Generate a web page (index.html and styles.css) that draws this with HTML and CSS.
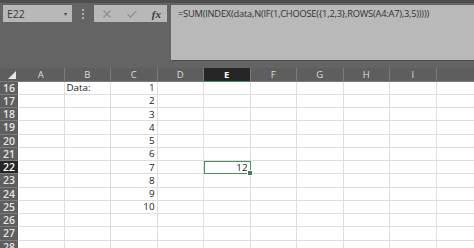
FILE: index.html
```html
<!DOCTYPE html>
<html>
<head>
<meta charset="utf-8">
<link rel="stylesheet" href="styles.css">
</head>
<body>
<div class="app">
  <div class="fbar">
    <div class="namebox"><span>E22</span><span class="caret">&#9662;</span></div>
    <div class="grip"><i></i><i></i><i></i></div>
    <div class="btns">
      <svg class="ico" width="10" height="10" viewBox="0 0 10 10"><path d="M1.5 1.5L8.5 8.5M8.5 1.5L1.5 8.5" stroke="#8c8c8c" stroke-width="1.1" fill="none"/></svg>
      <svg class="ico" width="12" height="10" viewBox="0 0 12 10"><path d="M1.5 5.2L4.5 8.2L10.5 1.8" stroke="#8c8c8c" stroke-width="1.2" fill="none"/></svg>
      <span class="fx">fx</span>
    </div>
    <div class="formula">=SUM(INDEX(data,N(IF(1,CHOOSE({1,2,3},ROWS(A4:A7),3,5)))))</div>
  </div>
  <div class="sheet">
    <div class="corner"><svg width="8" height="8" viewBox="0 0 8 8"><path d="M8 0L8 8L0 8Z" fill="#e6e6e6"/></svg></div>
    <div class="ch">A</div><div class="ch">B</div><div class="ch">C</div><div class="ch">D</div><div class="ch sel">E</div><div class="ch">F</div><div class="ch">G</div><div class="ch">H</div><div class="ch">I</div><div class="ch"></div>

    <div class="rh">16</div><div class="c"></div><div class="c">Data:</div><div class="c n">1</div><div class="c"></div><div class="c"></div><div class="c"></div><div class="c"></div><div class="c"></div><div class="c"></div><div class="c"></div>
    <div class="rh">17</div><div class="c"></div><div class="c"></div><div class="c n">2</div><div class="c"></div><div class="c"></div><div class="c"></div><div class="c"></div><div class="c"></div><div class="c"></div><div class="c"></div>
    <div class="rh">18</div><div class="c"></div><div class="c"></div><div class="c n">3</div><div class="c"></div><div class="c"></div><div class="c"></div><div class="c"></div><div class="c"></div><div class="c"></div><div class="c"></div>
    <div class="rh">19</div><div class="c"></div><div class="c"></div><div class="c n">4</div><div class="c"></div><div class="c"></div><div class="c"></div><div class="c"></div><div class="c"></div><div class="c"></div><div class="c"></div>
    <div class="rh">20</div><div class="c"></div><div class="c"></div><div class="c n">5</div><div class="c"></div><div class="c"></div><div class="c"></div><div class="c"></div><div class="c"></div><div class="c"></div><div class="c"></div>
    <div class="rh">21</div><div class="c"></div><div class="c"></div><div class="c n">6</div><div class="c"></div><div class="c"></div><div class="c"></div><div class="c"></div><div class="c"></div><div class="c"></div><div class="c"></div>
    <div class="rh sel">22</div><div class="c"></div><div class="c"></div><div class="c n">7</div><div class="c"></div><div class="c n active">12<span class="handle"></span></div><div class="c"></div><div class="c"></div><div class="c"></div><div class="c"></div><div class="c"></div>
    <div class="rh">23</div><div class="c"></div><div class="c"></div><div class="c n">8</div><div class="c"></div><div class="c"></div><div class="c"></div><div class="c"></div><div class="c"></div><div class="c"></div><div class="c"></div>
    <div class="rh">24</div><div class="c"></div><div class="c"></div><div class="c n">9</div><div class="c"></div><div class="c"></div><div class="c"></div><div class="c"></div><div class="c"></div><div class="c"></div><div class="c"></div>
    <div class="rh">25</div><div class="c"></div><div class="c"></div><div class="c n">10</div><div class="c"></div><div class="c"></div><div class="c"></div><div class="c"></div><div class="c"></div><div class="c"></div><div class="c"></div>
    <div class="rh">26</div><div class="c"></div><div class="c"></div><div class="c"></div><div class="c"></div><div class="c"></div><div class="c"></div><div class="c"></div><div class="c"></div><div class="c"></div><div class="c"></div>
    <div class="rh">27</div><div class="c"></div><div class="c"></div><div class="c"></div><div class="c"></div><div class="c"></div><div class="c"></div><div class="c"></div><div class="c"></div><div class="c"></div><div class="c"></div>
    <div class="rh">28</div><div class="c"></div><div class="c"></div><div class="c"></div><div class="c"></div><div class="c"></div><div class="c"></div><div class="c"></div><div class="c"></div><div class="c"></div><div class="c"></div>
  </div>
</div>
</body>
</html>
```

FILE: styles.css
```css
html, body {
  margin: 0;
  padding: 0;
  width: 474px;
  height: 248px;
  overflow: hidden;
  background: #646464;
  font-family: "Open Sans", "Liberation Sans", sans-serif;
}
.app {
  width: 474px;
  height: 248px;
  overflow: hidden;
  border-top: 3px solid #4e4e4e;
  box-sizing: border-box;
}
.fbar {
  display: flex;
  align-items: flex-start;
  height: 65px;
  padding-top: 2px;
  box-sizing: border-box;
  background: #646464;
}
.namebox {
  margin-left: 3px;
  width: 69px;
  height: 17px;
  background: #b8b8b8;
  display: flex;
  align-items: center;
  justify-content: space-between;
  padding: 0 5px 0 4px;
  box-sizing: border-box;
  font-size: 10.5px;
  color: #3a3a3a;
}
.caret {
  font-size: 6px;
  color: #444;
}
.grip {
  width: 22px;
  height: 17px;
  display: flex;
  flex-direction: column;
  align-items: center;
  justify-content: center;
  gap: 2px;
  padding-right: 1px;
  box-sizing: border-box;
}
.grip i {
  display: block;
  width: 2px;
  height: 2px;
  background: #b0b0b0;
}
.btns {
  width: 73px;
  height: 17px;
  background: #b8b8b8;
  display: flex;
  align-items: center;
  justify-content: space-between;
  padding: 0 6px 0 8px;
  box-sizing: border-box;
}
.ico {
  display: block;
}
.fx {
  font-family: "Liberation Serif", serif;
  font-style: italic;
  font-weight: bold;
  font-size: 11px;
  color: #3a3a3a;
}
.formula {
  margin-left: 4px;
  flex: 1;
  height: 56px;
  background: #b9b9b9;
  border-bottom: 1px solid #4e4e4e;
  padding: 2px 0 0 7px;
  box-sizing: border-box;
  font-size: 9.3px;
  letter-spacing: -0.22px;
  color: #333;
  white-space: nowrap;
}
.sheet {
  display: grid;
  grid-template-columns: 18px repeat(10, 46.5px);
  grid-template-rows: 13.5px repeat(13, 13.25px);
}
.corner {
  background: #5e5e5e;
  display: flex;
  align-items: flex-end;
  justify-content: flex-end;
  padding: 0 2px 2px 0;
  box-sizing: border-box;
  border-bottom: 1px solid #7a7a7a;
}
.corner svg { display: block; }
.ch {
  background: #5e5e5e;
  color: #dcdcdc;
  font-size: 9.5px;
  display: flex;
  align-items: center;
  justify-content: center;
  border-right: 1px solid #7a7a7a;
  border-bottom: 1px solid #7a7a7a;
  box-sizing: border-box;
}
.ch.sel {
  background: #262626;
  color: #ffffff;
  font-weight: bold;
  border-bottom: 1px solid #3f8f5f;
}
.rh {
  background: #5e5e5e;
  color: #e4e4e4;
  font-size: 10.5px;
  font-weight: 600;
  display: flex;
  align-items: center;
  justify-content: center;
  border-bottom: 1px solid #7c7c7c;
  box-sizing: border-box;
}
.rh.sel {
  background: #262626;
  color: #ffffff;
}
.c {
  background: #ffffff;
  border-right: 1px solid #dedede;
  border-bottom: 1px solid #dedede;
  box-sizing: border-box;
  font-size: 9.8px;
  color: #222;
  display: flex;
  align-items: center;
  padding: 0 2px;
  white-space: nowrap;
}
.c.n {
  justify-content: flex-end;
}
.c.active {
  position: relative;
  border: 1.5px solid #4f8d66;
}
.handle {
  position: absolute;
  right: -3px;
  bottom: -3px;
  width: 4px;
  height: 4px;
  background: #3f7f57;
  border: 1px solid #fff;
}
```
